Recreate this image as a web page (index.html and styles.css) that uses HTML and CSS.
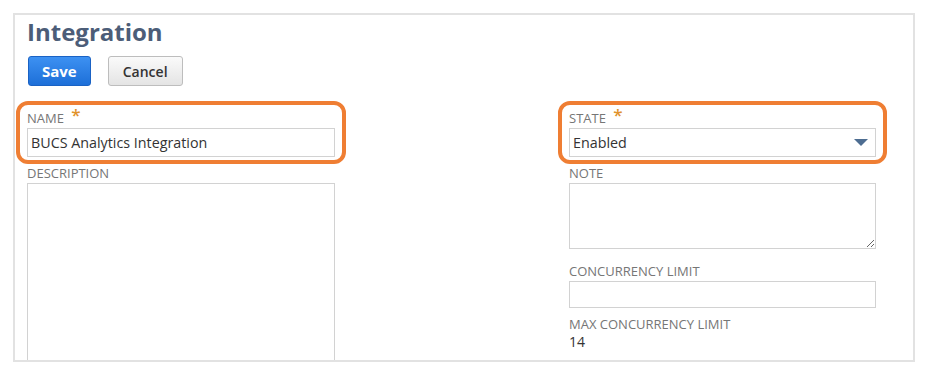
FILE: index.html
```html
<!DOCTYPE html>
<html lang="en">
<head>
    <meta charset="UTF-8">
    <title>Integration</title>
    <link rel="stylesheet" href="styles.css">
</head>
<body>
    <div class="record-frame">
        <h1 class="page-title">Integration</h1>

        <div class="actions">
            <button class="btn btn-primary">Save</button>
            <button class="btn btn-secondary">Cancel</button>
        </div>

        <div class="form-grid">
            <div class="column">
                <div class="field highlighted">
                    <label class="field-label">Name <span class="required">*</span></label>
                    <input class="text-input" type="text" value="BUCS Analytics Integration">
                </div>
                <div class="field">
                    <label class="field-label">Description</label>
                    <textarea class="text-area description"></textarea>
                </div>
            </div>

            <div class="column">
                <div class="field highlighted">
                    <label class="field-label">State <span class="required">*</span></label>
                    <div class="select-box">
                        <span>Enabled</span>
                        <span class="caret"></span>
                    </div>
                </div>
                <div class="field">
                    <label class="field-label">Note</label>
                    <textarea class="text-area note"></textarea>
                </div>
                <div class="field">
                    <label class="field-label">Concurrency Limit</label>
                    <input class="text-input short" type="text">
                </div>
                <div class="field">
                    <label class="field-label">Max Concurrency Limit</label>
                    <div class="field-value">14</div>
                </div>
            </div>
        </div>
    </div>
</body>
</html>
```

FILE: styles.css
```css
* {
    box-sizing: border-box;
}

body {
    margin: 0;
    padding: 13px 0 0 13px;
    height: 100vh;
    overflow: hidden;
    background: #ffffff;
    font-family: 'Open Sans', 'Noto Sans', sans-serif;
    color: #333333;
}

.record-frame {
    width: 902px;
    height: 349px;
    border: 2px solid #e2e2e2;
    padding: 2px 37px 0 12px;
    overflow: hidden;
}

.page-title {
    margin: 0;
    font-size: 24px;
    line-height: 29px;
    font-weight: 700;
    color: #4c5d78;
}

/* Buttons */
.actions {
    display: flex;
    gap: 17px;
    margin-top: 10px;
    padding-left: 1px;
}

.btn {
    height: 30px;
    border-radius: 3px;
    font-family: inherit;
    cursor: pointer;
}

.btn-primary {
    padding: 0 13px;
    font-size: 15px;
    font-weight: 700;
    color: #ffffff;
    background: linear-gradient(180deg, #3d91f2 0%, #1d6fd8 100%);
    border: 1px solid #1a62c4;
}

.btn-secondary {
    padding: 0 14px;
    font-size: 14px;
    font-weight: 600;
    color: #333333;
    background: linear-gradient(180deg, #fafafa 0%, #e4e4e4 100%);
    border: 1px solid #bdbdbd;
}

/* Form layout */
.form-grid {
    display: grid;
    grid-template-columns: 308px 1fr;
    column-gap: 234px;
    margin-top: 24px;
}

.column {
    display: flex;
    flex-direction: column;
}

.field {
    position: relative;
    margin-bottom: 9px;
}

/* Orange annotation ring drawn over the field */
.highlighted::before {
    content: '';
    position: absolute;
    top: -9px;
    bottom: -7px;
    left: -11px;
    right: -11px;
    border: 4px solid #ef7e33;
    border-radius: 12px;
    pointer-events: none;
}

.field-label {
    display: block;
    font-size: 13px;
    line-height: 15px;
    text-transform: uppercase;
    color: #767676;
    margin-bottom: 2px;
    white-space: nowrap;
}

.required {
    display: inline-block;
    margin-left: 4px;
    font-size: 17px;
    line-height: 10px;
    font-weight: 600;
    color: #e0922c;
    vertical-align: 2px;
}

.text-input {
    display: block;
    width: 100%;
    height: 29px;
    padding: 0 3px;
    border: 1px solid #d2d2d2;
    font-family: inherit;
    font-size: 14.3px;
    color: #333333;
    background: #ffffff;
    outline: none;
}

.text-input.short {
    height: 27px;
}

.select-box {
    display: flex;
    align-items: center;
    justify-content: space-between;
    height: 29px;
    padding: 0 7px 0 3px;
    border: 1px solid #d2d2d2;
    font-size: 14.3px;
    color: #333333;
}

.caret {
    width: 0;
    height: 0;
    border-left: 7px solid transparent;
    border-right: 7px solid transparent;
    border-top: 7px solid #4d6d91;
}

.text-area {
    display: block;
    width: 100%;
    border: 1px solid #d2d2d2;
    font-family: inherit;
    font-size: 14px;
    outline: none;
}

.text-area.note {
    height: 66px;
    margin-bottom: 6px;
}

.text-area.description {
    height: 200px;
    resize: none;
}

.field-value {
    font-size: 14px;
    line-height: 18px;
    color: #333333;
    margin-top: -1px;
}
```
